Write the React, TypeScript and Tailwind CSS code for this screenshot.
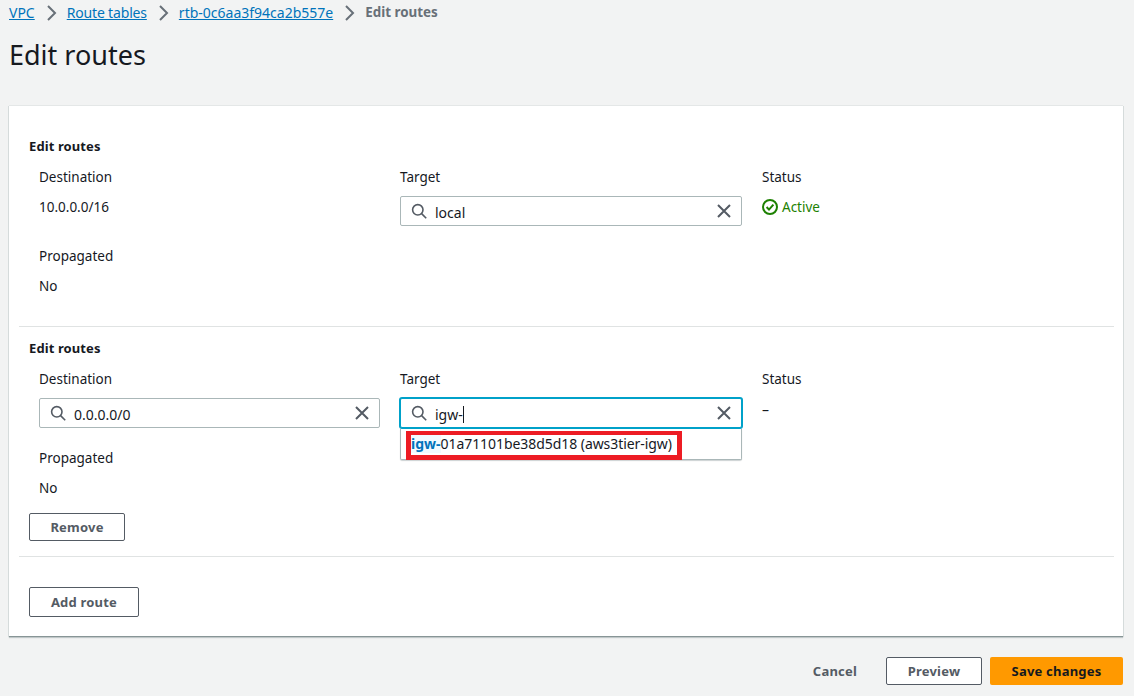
import React from "react";

const Chevron = () => (
  <svg width="16" height="16" viewBox="0 0 16 16" fill="none" stroke="#687078" strokeWidth="2" className="shrink-0">
    <path d="M5 1l7 7-7 7" />
  </svg>
);

const Search = () => (
  <svg width="16" height="16" viewBox="0 0 16 16" fill="none" stroke="#545b64" strokeWidth="1.6" className="shrink-0">
    <circle cx="6.8" cy="6.8" r="5.2" />
    <path d="M10.6 10.6l4.6 4.6" />
  </svg>
);

const Clear = () => (
  <svg width="16" height="16" viewBox="0 0 16 16" fill="none" stroke="#545b64" strokeWidth="2" className="shrink-0">
    <path d="M2 2l12 12M14 2L2 14" />
  </svg>
);

const Check = () => (
  <svg width="16" height="16" viewBox="0 0 16 16" fill="none" stroke="#1d8102" strokeWidth="2" className="shrink-0">
    <circle cx="8" cy="8" r="7" />
    <path d="M4.6 8l2.4 2.6 4.4-5" />
  </svg>
);

function SearchInput({ value, focused, caret }: { value: string; focused?: boolean; caret?: boolean }) {
  return (
    <div
      className={
        "h-[30px] w-full flex items-center rounded-[2px] bg-white border pl-[10px] pr-[9px] " +
        (focused ? "border-[#00a1c9] shadow-[0_0_0_1px_#00a1c9]" : "border-[#aab7b8]")
      }
    >
      <Search />
      <span className="ml-[8px] flex-1 flex items-center pt-[2px] text-[14px] text-[#16191f]">
        {value}
        {caret && <span className="inline-block w-px h-[17px] bg-[#16191f]" />}
      </span>
      <Clear />
    </div>
  );
}

function Btn({ label, className }: { label: string; className: string }) {
  return (
    <div
      className={
        "h-[28px] flex items-center justify-center rounded-[2px] border border-[#545b64] bg-white pt-[1px] font-bold text-[13px] text-[#545b64] tracking-[0.2px] " +
        className
      }
    >
      {label}
    </div>
  );
}

function Route({ dest, target, status }: { dest: React.ReactNode; target: React.ReactNode; status: React.ReactNode }) {
  return (
    <div>
      <div className="font-bold text-[#16191f] text-[13px] tracking-[0.1px] leading-[20px]">Edit routes</div>
      <div className="mt-[11px] pl-[10px] grid grid-cols-[341px_342px_auto] gap-x-[20px]">
        <div className="leading-[21px]">Destination</div>
        <div className="leading-[21px]">Target</div>
        <div className="leading-[21px]">Status</div>
        <div className="mt-[8px] h-[30px]">{dest}</div>
        <div className="mt-[8px] h-[30px] relative">{target}</div>
        <div className="mt-[8px] h-[30px]">{status}</div>
      </div>
      <div className="mt-[20px] pl-[10px] leading-[21px]">Propagated</div>
      <div className="mt-[9px] pl-[10px] leading-[21px]">No</div>
    </div>
  );
}

export default function App() {
  return (
    <div
      className="w-[1134px] h-[696px] overflow-hidden bg-[#f2f3f3] text-[13.5px] text-[#16191f]"
      style={{ fontFamily: '"Noto Sans", sans-serif' }}
    >
      <div className="h-[25px] pl-[9px] flex items-center text-[14px]">
        <span className="text-[#0073bb] underline">VPC</span>
        <span className="mx-[8px]"><Chevron /></span>
        <span className="text-[#0073bb] underline tracking-[-0.17px]">Route tables</span>
        <span className="mx-[8px]"><Chevron /></span>
        <span className="text-[#0073bb] underline">rtb-0c6aa3f94ca2b557e</span>
        <span className="mx-[8px]"><Chevron /></span>
        <span className="font-bold text-[13.4px] text-[#687078]">Edit routes</span>
      </div>
      <h1 className="mt-[10px] pl-[9px] text-[27px] leading-[40px] font-normal text-[#16191f]">Edit routes</h1>
      <div className="mt-[31px] ml-[9px] w-[1114px] h-[531px] bg-white border-b border-[#879596] shadow-[0_-1px_0_0_#e4e7e7,1px_0_0_0_#d5dbdb,-1px_0_0_0_#d5dbdb,0_1px_1px_0_rgba(0,28,36,0.2)] pt-[30px] px-[10px]">
        <div className="pl-[10px]">
          <Route
            dest={<div className="pt-[1px] leading-[20px]">10.0.0.0/16</div>}
            target={<SearchInput value="local" />}
            status={
              <div className="flex items-center gap-[4px] text-[#1d8102] pt-[1px]">
                <Check />
                <span className="leading-[20px]">Active</span>
              </div>
            }
          />
        </div>
        <div className="mt-[29px] h-px bg-[#e0e3e3] w-[1095px]" />
        <div className="mt-[11px] pl-[10px]">
          <Route
            dest={<SearchInput value="0.0.0.0/0" />}
            target={
              <>
                <SearchInput value="igw-" focused caret />
                <div className="absolute left-0 right-0 top-[31px] h-[31px] bg-white border-x border-b border-[#aab7b8] rounded-b-[2px] shadow-[0_1px_1px_0_rgba(0,28,36,0.2)] pl-[10px] leading-[29px] text-[14px] text-[#16191f] z-10">
                  <span className="font-bold text-[#0073bb] bg-[#f1faff]">igw-</span>
                  <span className="tracking-[-0.06px]">01a71101be38d5d18 (aws3tier-igw)</span>
                  <div className="absolute left-[5px] top-[2px] w-[276px] h-[29px] border-[5px] border-t-[4px] border-[#ed1c24]" />
                </div>
              </>
            }
            status={<div className="pt-[2px] leading-[20px] text-[14px]">–</div>}
          />
          <div className="mt-[14px]">
            <Btn label="Remove" className="w-[96px]" />
          </div>
        </div>
        <div className="mt-[15px] h-px bg-[#e0e3e3] w-[1095px]" />
        <div className="mt-[30px] ml-[10px]">
          <Btn label="Add route" className="w-[110px] h-[30px]" />
        </div>
      </div>
      <div className="mt-[20px] pr-[11px] flex items-center justify-end">
        <span className="font-bold text-[13px] pt-[1px] text-[#545b64] mr-[29px] tracking-[0.2px]">Cancel</span>
        <Btn label="Preview" className="w-[96px] mr-[8px]" />
        <div className="h-[28px] w-[133px] flex items-center justify-center rounded-[2px] bg-[#ff9900] pt-[1px] font-bold text-[13px] text-[#16191f] tracking-[0.2px]">
          Save changes
        </div>
      </div>
    </div>
  );
}
